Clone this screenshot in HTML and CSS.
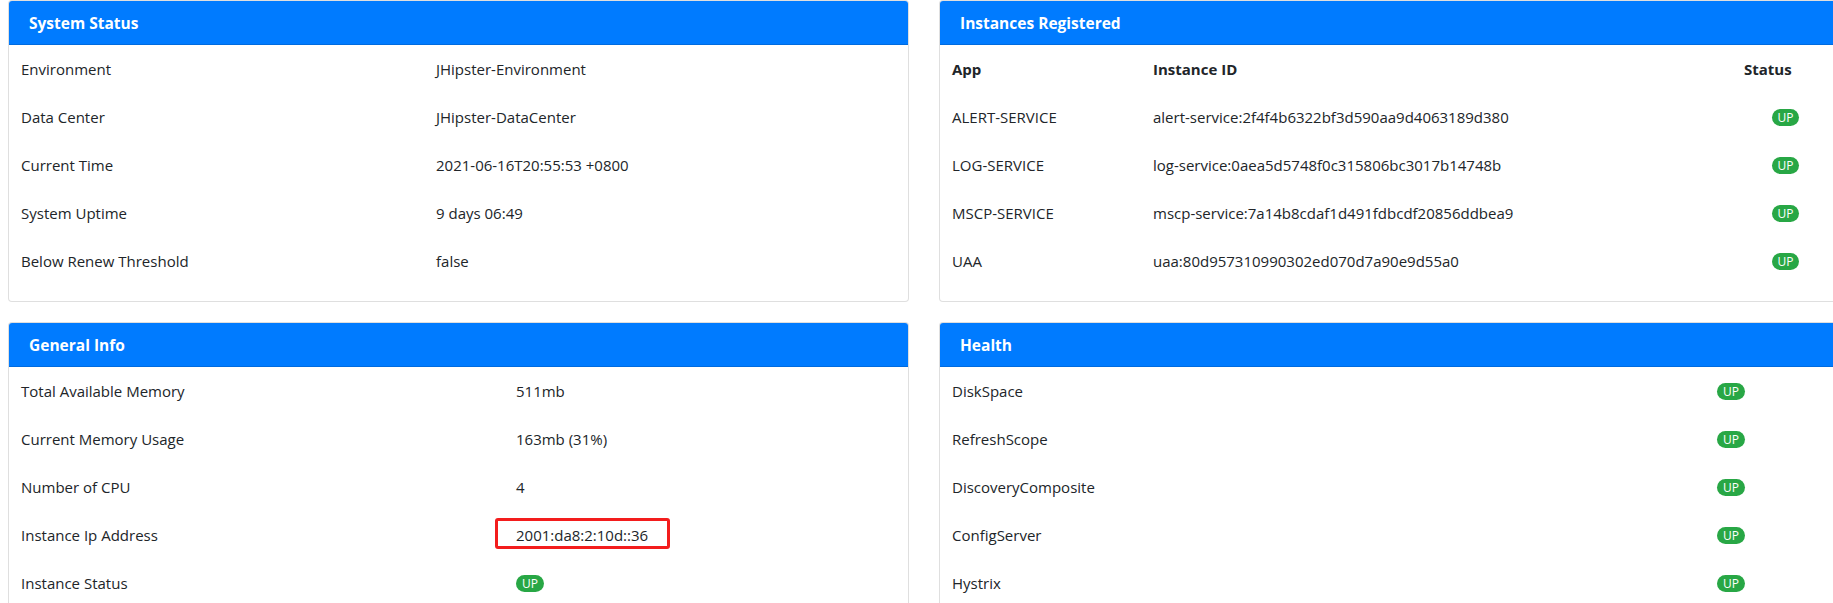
FILE: index.html
```html
<!DOCTYPE html>
<html>
<head>
<meta charset="utf-8">
<title>JHipster Registry</title>
<link rel="stylesheet" href="styles.css">
</head>
<body>
<div class="page">
  <section class="card">
    <div class="card-header">System Status</div>
    <table class="table">
      <colgroup><col class="c-sys-1"><col></colgroup>
      <tbody>
        <tr><td>Environment</td><td>JHipster-Environment</td></tr>
        <tr><td>Data Center</td><td>JHipster-DataCenter</td></tr>
        <tr><td>Current Time</td><td>2021-06-16T20:55:53 +0800</td></tr>
        <tr><td>System Uptime</td><td>9 days 06:49</td></tr>
        <tr><td>Below Renew Threshold</td><td>false</td></tr>
      </tbody>
    </table>
  </section>

  <section class="card">
    <div class="card-header">Instances Registered</div>
    <table class="table">
      <colgroup><col class="c-inst-1"><col class="c-inst-2"><col></colgroup>
      <thead>
        <tr><th>App</th><th>Instance ID</th><th>Status</th></tr>
      </thead>
      <tbody>
        <tr><td>ALERT-SERVICE</td><td>alert-service:2f4f4b6322bf3d590aa9d4063189d380</td><td class="center"><span class="badge">UP</span></td></tr>
        <tr><td>LOG-SERVICE</td><td>log-service:0aea5d5748f0c315806bc3017b14748b</td><td class="center"><span class="badge">UP</span></td></tr>
        <tr><td>MSCP-SERVICE</td><td>mscp-service:7a14b8cdaf1d491fdbcdf20856ddbea9</td><td class="center"><span class="badge">UP</span></td></tr>
        <tr><td>UAA</td><td>uaa:80d957310990302ed070d7a90e9d55a0</td><td class="center"><span class="badge">UP</span></td></tr>
      </tbody>
    </table>
  </section>

  <section class="card">
    <div class="card-header">General Info</div>
    <table class="table">
      <colgroup><col class="c-gen-1"><col></colgroup>
      <tbody>
        <tr><td>Total Available Memory</td><td>511mb</td></tr>
        <tr><td>Current Memory Usage</td><td>163mb (31%)</td></tr>
        <tr><td>Number of CPU</td><td>4</td></tr>
        <tr><td>Instance Ip Address</td><td><span class="marked">2001:da8:2:10d::36</span></td></tr>
        <tr><td>Instance Status</td><td><span class="badge">UP</span></td></tr>
      </tbody>
    </table>
  </section>

  <section class="card">
    <div class="card-header">Health</div>
    <table class="table">
      <colgroup><col class="c-health-1"><col></colgroup>
      <tbody>
        <tr><td>DiskSpace</td><td><span class="badge">UP</span></td></tr>
        <tr><td>RefreshScope</td><td><span class="badge">UP</span></td></tr>
        <tr><td>DiscoveryComposite</td><td><span class="badge">UP</span></td></tr>
        <tr><td>ConfigServer</td><td><span class="badge">UP</span></td></tr>
        <tr><td>Hystrix</td><td><span class="badge">UP</span></td></tr>
      </tbody>
    </table>
  </section>
</div>
</body>
</html>
```
FILE: styles.css
```css
html, body {
  margin: 0;
  padding: 0;
  background: #ffffff;
  overflow: hidden;
}

body {
  font-family: "Open Sans", "Noto Sans", sans-serif;
  font-size: 15px;
  line-height: 24px;
  color: #212529;
}

.page {
  display: grid;
  grid-template-columns: 901px 901px;
  column-gap: 30px;
  row-gap: 20px;
  align-items: start;
  padding-left: 8px;
  width: max-content;
}

.card {
  background: #ffffff;
  border: 1px solid rgba(0, 0, 0, 0.125);
  border-radius: 4px;
  overflow: hidden;
}

.card-header {
  background: #007bff;
  color: #ffffff;
  font-weight: 700;
  font-size: 15.5px;
  height: 44px;
  line-height: 42px;
  padding: 1px 20px 0;
  box-sizing: border-box;
  border-bottom: 1px solid rgba(0, 0, 0, 0.125);
}

.table {
  width: 100%;
  border-collapse: collapse;
  table-layout: fixed;
  margin-bottom: 16px;
}

.table th,
.table td {
  padding: 12px;
  text-align: left;
  vertical-align: middle;
  height: 24px;
  white-space: nowrap;
}

.table th {
  font-weight: 700;
}

.table td.center {
  text-align: center;
}

.c-sys-1 { width: 415px; }
.c-gen-1 { width: 495px; }
.c-inst-1 { width: 201px; }
.c-inst-2 { width: 591px; }
.c-health-1 { width: 765px; }

.badge {
  display: inline-block;
  vertical-align: middle;
  background: #28a745;
  color: #ffffff;
  font-size: 12px;
  line-height: 11px;
  padding: 3px 6px;
  border-radius: 10rem;
  position: relative;
  top: -1px;
}

.marked {
  position: relative;
  display: inline-block;
  line-height: 24px;
}

.marked::after {
  content: "";
  position: absolute;
  left: -21px;
  right: -22px;
  top: -5px;
  bottom: -2px;
  border: 3px solid #f31d1d;
  border-radius: 3px;
}
```
